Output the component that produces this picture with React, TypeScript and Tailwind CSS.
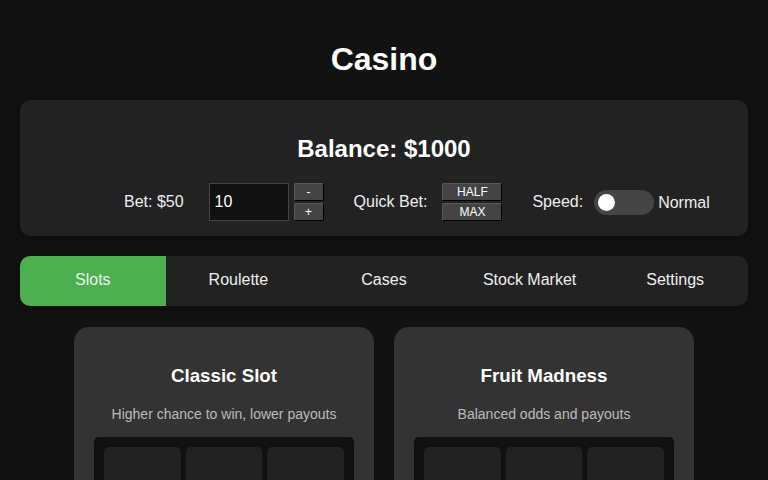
import { useState } from 'react';

const tabs = ['Slots', 'Roulette', 'Cases', 'Stock Market', 'Settings'];

const machines = [
  { name: 'Classic Slot', desc: 'Higher chance to win, lower payouts' },
  { name: 'Fruit Madness', desc: 'Balanced odds and payouts' },
];

export default function App() {
  const [active, setActive] = useState('Slots');
  const [bet, setBet] = useState('10');
  const [fast, setFast] = useState(false);

  const btn =
    'flex items-center justify-center bg-[#444] text-white text-[12px] leading-none border border-[#5a5a5a] border-r-black border-b-black rounded-[2px]';

  return (
    <div
      className="min-h-[480px] bg-[#121212] text-white px-5 pt-[41px]"
      style={{ fontFamily: '"Liberation Sans", Arial, sans-serif' }}
    >
      {/* Header */}
      <h1 className="text-center text-[32px] font-bold leading-[37px] mb-[22px]">Casino</h1>

      {/* Balance + controls */}
      <div className="bg-[#222] rounded-[10px] shadow-[0_2px_8px_rgba(0,0,0,0.5)] h-[136px] pt-[35px]">
        <h2 className="text-center text-[24px] font-bold leading-[28px]">Balance: $1000</h2>
        <div className="flex items-center mt-[20px] pl-[104px] text-[16px] text-[#eee]">
          <span>Bet: $50</span>
          <input
            value={bet}
            onChange={(e) => setBet(e.target.value)}
            className="ml-[25px] w-[80px] h-[38px] bg-[#111] border border-[#444] px-[5px] text-white text-[16px] outline-none"
          />
          <div className="ml-[5px] flex flex-col gap-[2px]">
            <button className={btn + ' w-[30px] h-[18px]'}>-</button>
            <button className={btn + ' w-[30px] h-[18px]'}>+</button>
          </div>
          <span className="ml-[30px]">Quick Bet:</span>
          <div className="ml-[15px] flex flex-col gap-[2px]">
            <button className={btn + ' w-[60px] h-[18px]'}>HALF</button>
            <button className={btn + ' w-[60px] h-[18px]'}>MAX</button>
          </div>
          <span className="ml-[30px]">Speed:</span>
          <button
            onClick={() => setFast(!fast)}
            className="ml-[11px] w-[60px] h-[25px] rounded-full bg-[#444] relative"
          >
            <span
              className={
                'absolute top-[4px] w-[17px] h-[17px] rounded-full bg-white ' +
                (fast ? 'left-[39px]' : 'left-[4px]')
              }
            />
          </button>
          <span className="ml-[4px] mt-[2px]">{fast ? 'Fast' : 'Normal'}</span>
        </div>
      </div>

      {/* Tabs */}
      <div className="mt-5 flex bg-[#222] rounded-[10px] overflow-hidden h-[50px] shadow-[0_2px_8px_rgba(0,0,0,0.5)]">
        {tabs.map((t) => (
          <button
            key={t}
            onClick={() => setActive(t)}
            className={
              'flex-1 text-[16px] text-[#eee] pb-[2px] ' + (active === t ? 'bg-[#4caf50]' : 'bg-transparent')
            }
          >
            {t}
          </button>
        ))}
      </div>

      {/* Slot machines */}
      <div className="mt-[21px] flex justify-center gap-5">
        {machines.map((m) => (
          <div key={m.name} className="w-[300px] bg-[#333] rounded-[15px] px-5 pt-[38px] pb-5">
            <h3 className="text-center text-[18.72px] font-bold leading-[22px]">{m.name}</h3>
            <p className="text-center text-[14px] text-[#bbb] mt-[19px] leading-[16px]">{m.desc}</p>
            <div className="mt-[15px] bg-[#111] rounded-[5px] p-[10px] flex gap-[5px]">
              {[0, 1, 2].map((i) => (
                <div key={i} className="flex-1 h-[100px] bg-[#222] rounded-[5px]" />
              ))}
            </div>
          </div>
        ))}
      </div>
    </div>
  );
}
